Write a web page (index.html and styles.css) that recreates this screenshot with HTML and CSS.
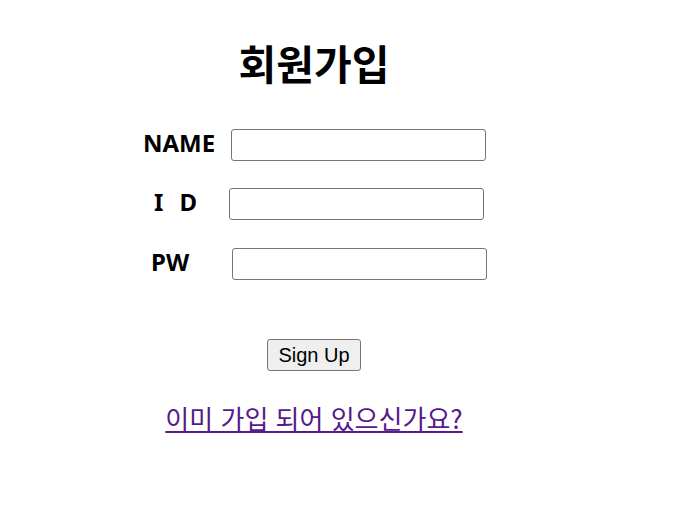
FILE: index.html
```html
<!DOCTYPE html>
<html lang="ko">
<head>
    <meta charset="UTF-8">
    <meta name="viewport" content="width=device-width, initial-scale=1.0">
    <title>회원가입</title>
    <link rel="stylesheet" href="styles.css">
</head>
<body>
    <div class="wrap">
        <h1>회원가입</h1>
        <form id="joinForm">
            <div class="row row-name">
                <label for="name">NAME</label>
                <input type="text" id="name" name="name">
            </div>
            <div class="row row-id">
                <label for="uid">I D</label>
                <input type="text" id="uid" name="uid">
            </div>
            <div class="row row-pw">
                <label for="pw">PW</label>
                <input type="password" id="pw" name="pw">
            </div>
            <button type="submit">Sign Up</button>
        </form>
        <a class="login-link" href="#">이미 가입 되어 있으신가요?</a>
    </div>
</body>
</html>
```

FILE: styles.css
```css
body {
    margin: 0;
    font-family: "Noto Sans CJK KR", "Noto Sans", sans-serif;
}
.wrap {
    width: 612px;
    margin-left: 8px;
    display: flex;
    flex-direction: column;
    align-items: center;
}
h1 {
    font-size: 41px;
    font-weight: bold;
    margin: 38px 0 42px;
    line-height: 1.2;
}
form {
    align-self: stretch;
    display: flex;
    flex-direction: column;
}
.row {
    display: flex;
    align-items: center;
    height: 32px;
    margin-bottom: 28px;
}
.row label {
    font-family: "Noto Sans", sans-serif;
    font-size: 24px;
    font-weight: bold;
    white-space: nowrap;
    padding-bottom: 6px;
}
.row-name { padding-left: 135px; margin-bottom: 27px; }
.row-name label { width: 88px; }
.row-id { padding-left: 146px; }
.row-id label { width: 75px; word-spacing: 10px; }
.row-pw { padding-left: 143px; }
.row-pw label { width: 81px; }
input {
    width: 255px;
    height: 32px;
    box-sizing: border-box;
    border: 1px solid #767676;
    border-radius: 3px;
}
button {
    align-self: center;
    margin-top: 31px;
    font-family: "Liberation Sans", Arial, sans-serif;
    font-size: 20px;
    padding: 1px 10.5px;
    height: 32px;
    background-color: #efefef;
    border: 1px solid #767676;
    border-radius: 3px;
}
.login-link {
    margin-top: 28px;
    font-size: 26px;
    color: #551a8b;
}
```
